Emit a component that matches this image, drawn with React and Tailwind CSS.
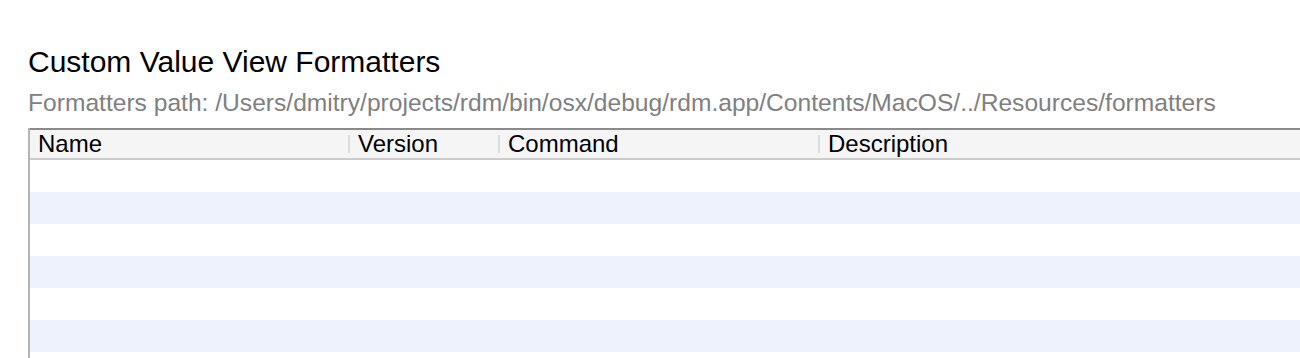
export default function App() {
  const cols = [
    { name: "Name", w: "w-[318px]" },
    { name: "Version", w: "w-[150px]" },
    { name: "Command", w: "w-[320px]" },
    { name: "Description", w: "flex-1" },
  ];
  const rows = [0, 1, 2, 3, 4, 5, 6];
  return (
    <div
      className="w-[1300px] h-[358px] overflow-hidden bg-white pl-[28px] flex flex-col"
      style={{ fontFamily: '"Liberation Sans", Arial, sans-serif' }}
    >
      <div className="h-[47px] shrink-0" />
      <div className="shrink-0 text-[30px] leading-[30px] text-black">Custom Value View Formatters</div>
      <div className="shrink-0 mt-[13px] text-[24.6px] leading-[26px] text-[#808080] whitespace-nowrap">
        Formatters path: /Users/dmitry/projects/rdm/bin/osx/debug/rdm.app/Contents/MacOS/../Resources/formatters
      </div>
      <div className="mt-[12px] flex-1 border-l-2 border-[#b4b4b4] flex flex-col">
        <div className="h-[32px] shrink-0 border-t-2 border-[#8a8a8a] border-b-2 border-b-[#cbcbcb] bg-[#f5f5f5] flex items-center">
          {cols.map((c, i) => (
            <div key={c.name} className={`${c.w} flex items-center h-full`}>
              {i > 0 && <div className="w-[2px] h-[18px] bg-[#dcdcdc]" />}
              <span className="pl-[8px] text-[24px] leading-none text-black">{c.name}</span>
            </div>
          ))}
        </div>
        {rows.map((r) => (
          <div key={r} className={`h-[32px] shrink-0 ${r % 2 === 1 ? "bg-[#edf2fc]" : "bg-white"}`} />
        ))}
      </div>
    </div>
  );
}
